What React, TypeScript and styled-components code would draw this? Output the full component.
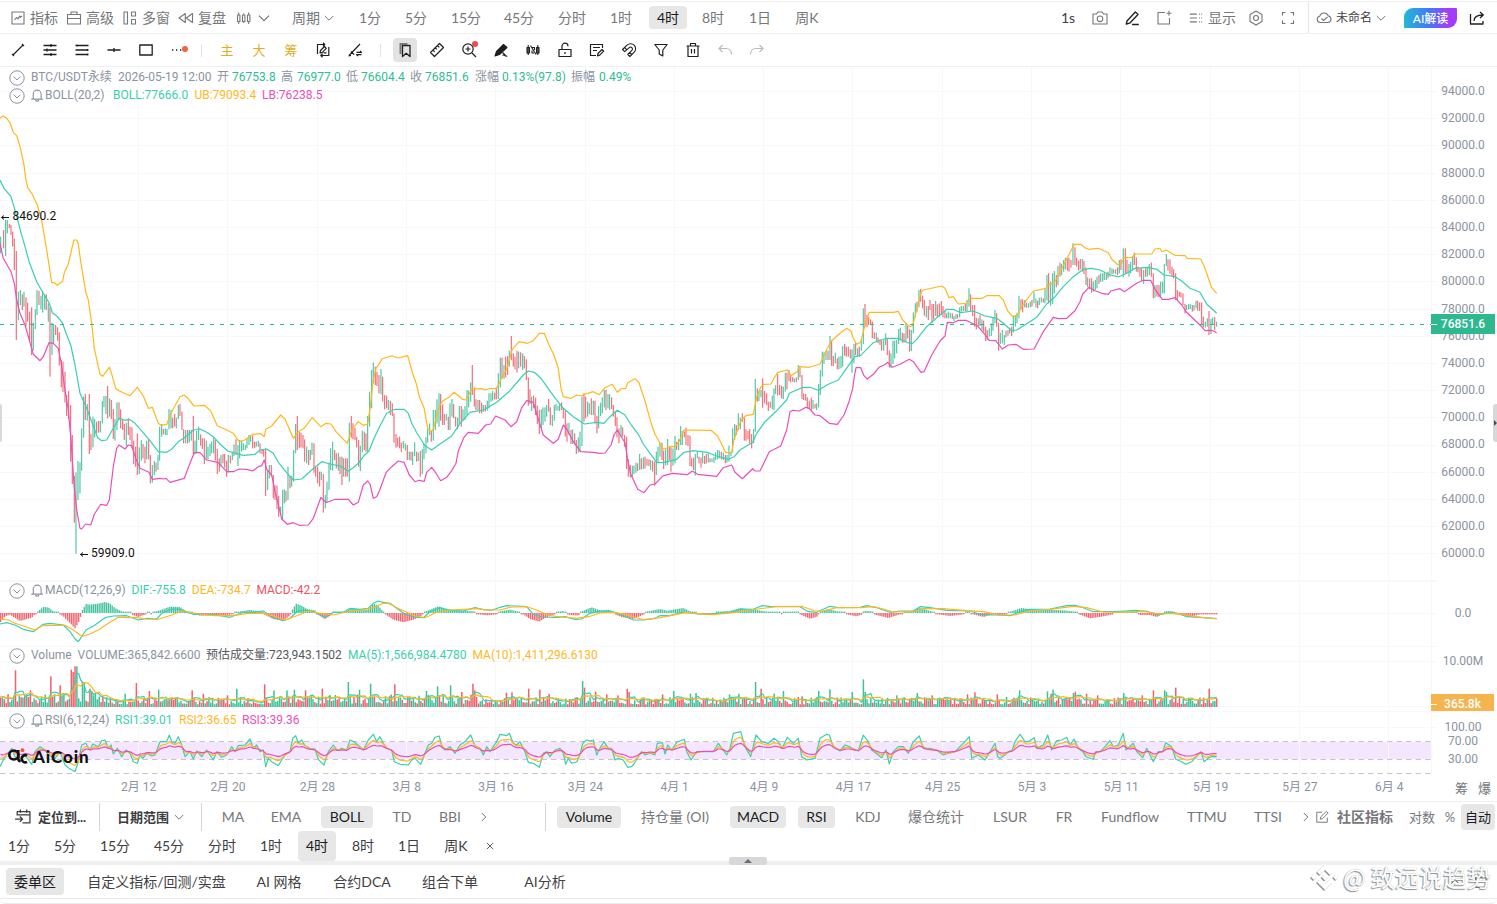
import React from "react";
import styled, { createGlobalStyle, css } from "styled-components";

const GREEN = "#2ebd92";
const RED = "#f0525f";
const TEAL = "#38d0b0";
const AMBER = "#ffb81c";
const PINK = "#e750bb";
const MUTED = "#8b93a1";

const GlobalStyle = createGlobalStyle`
  * { box-sizing: border-box; }
  body { margin: 0; background: #fff; overflow: hidden; }
  svg { display: block; flex: none; }
`;

const uiFont = `Lato, "Noto Sans CJK SC", sans-serif`;
const chartFont = `Roboto, "Noto Sans CJK SC", sans-serif`;

const Screen = styled.div`
  display: flex;
  flex-direction: column;
  width: 1497px;
  height: 904px;
  overflow: hidden;
  position: relative;
  background: #fff;
  font-family: ${uiFont};
  font-size: 14px;
  color: #75777b;
`;

const TopBar = styled.header`
  height: 33px;
  flex: none;
  margin-top: 1px;
  display: flex;
  align-items: center;
  border-top: 1px solid #f0f0f1;
  border-bottom: 1px solid #f0f0f1;
`;

const ToolBar = styled.nav`
  height: 33px;
  flex: none;
  display: flex;
  align-items: center;
  padding-left: 2px;
  border-bottom: 1px solid #f0f0f1;
  color: #1e1f22;
`;

type CellProps = { $w: number; $gap?: number; $active?: boolean; $h?: number; $bold?: boolean; $size?: number; $color?: string };

const Cell = styled.div<CellProps>`
  width: ${(p) => p.$w}px;
  height: ${(p) => p.$h ?? 22}px;
  margin-left: ${(p) => p.$gap ?? 0}px;
  flex: none;
  display: flex;
  align-items: center;
  justify-content: center;
  white-space: nowrap;
  line-height: 20px;
  font-size: ${(p) => p.$size ?? 14}px;
  font-weight: ${(p) => (p.$bold ? 700 : 400)};
  ${(p) => p.$color && css`color: ${p.$color};`}
  ${(p) => p.$active && css`
    background: #e7e7e8;
    border-radius: 4px;
    color: #1b1c1f;
  `}
`;

const Tool = styled.button<{ $active?: boolean; $gold?: boolean; $dim?: boolean }>`
  width: 24px;
  height: 24px;
  margin: 0 4px;
  padding: ${(p) => (p.$gold ? "0 0 2px" : "0")};
  border: 0;
  flex: none;
  position: relative;
  display: flex;
  align-items: center;
  justify-content: center;
  border-radius: 4px;
  font: 13px ${uiFont};
  background: ${(p) => (p.$active ? "#e3e3e4" : "transparent")};
  color: ${(p) => (p.$gold ? "#dfae1f" : p.$dim ? "#b9babd" : "#1e1f22")};
`;

const Dot = styled.i<{ $x: number; $y: number; $c: string }>`
  position: absolute;
  left: ${(p) => p.$x}px;
  top: ${(p) => p.$y}px;
  width: 6px;
  height: 6px;
  border-radius: 50%;
  background: ${(p) => p.$c};
`;

const Rule = styled.i<{ $h: number; $before: number; $after: number; $c?: string }>`
  width: 1px;
  height: ${(p) => p.$h}px;
  margin: 0 ${(p) => p.$after}px 0 ${(p) => p.$before}px;
  flex: none;
  background: ${(p) => p.$c ?? "#e4e4e6"};
`;

const AiBadge = styled.div`
  width: 53px;
  height: 20px;
  margin-left: 18px;
  flex: none;
  border-radius: 9px 1px 9px 1px;
  background: linear-gradient(90deg, #24b8d3 0%, #3f7bfa 45%, #a43bfb 85%);
  color: #fff;
  font-size: 12px;
  line-height: 21px;
  text-align: center;
  font-weight: 500;
`;

const ChartArea = styled.main`
  height: 734px;
  flex: none;
  display: flex;
  flex-direction: column;
  position: relative;
  font-family: ${chartFont};
  font-size: 12px;
  color: ${MUTED};
`;

const Pane = styled.section<{ $h: number }>`
  height: ${(p) => p.$h}px;
  flex: none;
  display: flex;
`;

const Plot = styled.div`
  width: 1431px;
  flex: none;
  position: relative;
  svg { overflow: visible; }
`;

const Axis = styled.div<{ $top: number }>`
  width: 66px;
  padding-top: ${(p) => p.$top}px;
  display: flex;
  flex-direction: column;
  align-items: center;
  position: relative;
`;

const Tick = styled.span<{ $h: number; $gap?: number }>`
  height: ${(p) => p.$h}px;
  line-height: ${(p) => p.$h}px;
  margin-top: ${(p) => p.$gap ?? 0}px;
  padding-right: 2px;
  flex: none;
`;

const Tag = styled.div<{ $top: number; $h: number; $w: number; $bg: string; $drop?: number }>`
  position: absolute;
  left: 0;
  top: ${(p) => p.$top}px;
  width: ${(p) => p.$w}px;
  height: ${(p) => p.$h}px;
  line-height: ${(p) => p.$h + (p.$drop ?? 0)}px;
  background: ${(p) => p.$bg};
  color: #fff;
  font-weight: 500;
  text-align: center;
  &::before {
    content: "";
    position: absolute;
    left: 0;
    top: ${(p) => p.$h / 2 + (p.$drop ?? 0) / 3}px;
    width: 6px;
    height: 1px;
    background: #fff;
  }
`;

const Legends = styled.div<{ $top: number }>`
  position: absolute;
  left: 9px;
  top: ${(p) => p.$top}px;
  display: flex;
  flex-direction: column;
`;

const LegendRow = styled.div`
  height: 18px;
  display: flex;
  align-items: center;
  line-height: 18px;
`;

const Entry = styled.span<{ $w: number; $c?: string }>`
  width: ${(p) => p.$w}px;
  flex: none;
  white-space: nowrap;
  color: ${(p) => p.$c ?? MUTED};
`;

const TimeAxis = styled.div`
  height: 24px;
  flex: none;
  display: flex;
  align-items: center;
  padding: 0 0 5px 94px;
`;

const DateLabel = styled.span`
  width: 89.33px;
  flex: none;
  text-align: center;
  white-space: nowrap;
`;

const Corner = styled.div`
  margin-left: 21px;
  width: 36px;
  flex: none;
  display: flex;
  justify-content: space-between;
  font-size: 13px;
  color: #75777b;
  padding-top: 3px;
`;

const Brand = styled.div`
  position: absolute;
  left: 8px;
  top: 36px;
  display: flex;
  align-items: center;
  gap: 5px;
  color: #111;
  font: 900 17px/19px Lato, sans-serif;
  letter-spacing: 0.9px;
`;

const Indicators = styled.div`
  height: 30px;
  flex: none;
  display: flex;
  align-items: center;
  border-top: 1px solid #f0f0f1;
`;

const Periods = styled.div`
  height: 30px;
  flex: none;
  display: flex;
  align-items: center;
  color: #3c3e42;
`;

const Splitter = styled.div`
  height: 4px;
  flex: none;
  background: #efeff0;
  position: relative;
`;

const Grip = styled.div`
  position: absolute;
  left: 729px;
  top: -4px;
  width: 38px;
  height: 8px;
  border-radius: 2px;
  background: #d8d8da;
  display: flex;
  align-items: center;
  justify-content: center;
`;

const Orders = styled.footer`
  height: 34px;
  flex: none;
  display: flex;
  align-items: center;
  border-bottom: 1px solid #ececed;
  color: #3f4145;
`;

const Under = styled.div`
  height: 5px;
  flex: none;
  border-bottom: 1px solid #ececed;
  border-radius: 0 0 6px 6px;
`;

const SideGrip = styled.div<{ $right?: boolean }>`
  position: absolute;
  ${(p) => (p.$right ? "right: 0; width: 4px; border-radius: 3px 0 0 3px;" : "left: 0; width: 2px; border-radius: 0 2px 2px 0;")}
  top: 404px;
  height: 38px;
  background: #d8d8da;
  display: flex;
  align-items: center;
`;

const Watermark = styled.div`
  position: absolute;
  right: 6px;
  top: 862px;
  height: 30px;
  display: flex;
  align-items: center;
  gap: 3px;
  color: #fff;
  font: 24px/30px "Noto Sans CJK SC", sans-serif;
  white-space: nowrap;
  text-shadow: -1px 1px 1px #8d8d8d, 0 0 1px #a5a5a5;
  svg { filter: drop-shadow(-0.5px 1px 0.6px #8d8d8d); }
`;

/* ---------- chart data ---------- */

type Pt = [number, number];

// Series are stored in sub-pixel thirds, in blocks that share one origin.
const block = (ox: number, oy: number, src: string): Pt[] =>
  src.trim().split(/\s+/).map((s) => {
    const [a, b] = s.split(",").map(Number);
    return [ox + a / 3, oy + b / 3] as Pt;
  });

const upper = [
  ...block(0, 100, `0,55 10,48 20,55 30,68 40,97 50,107 60,140 72,195 77,235 83,263 95,280 112,315 125,362 140,450 155,547 163,548 172,556 188,543 193,518 205,492 217,440 222,420 230,420 235,432 242,485 257,575 265,600 275,670 283,745 300,823 308,829 315,820 328,802 333,815 347,865 358,873 390,887 412,862 430,888 445,925 457,922 475,970 483,976 500,973 515,935 540,890 552,885 562,893 582,918 613,916 632,932 652,977 680,990 700,1000 717,1025 735,1020 758,1003 782,1001 793,1010 797,988 815,978 842,945 855,957 880,1015 895,995 912,985 937,953 962,980 978,970 993,972 1008,995 1042,1030 1055,990 1075,965 1090,976 1103,972 1112,910 1120,840 1128,805`),
  ...block(380, 300, `0,188 5,177 35,167 55,174 83,167 97,217 110,255 118,290 132,323 143,385 152,395 160,388 178,318 188,303 207,292 222,277 233,285 247,298 258,300 275,268 303,266 317,270 327,266 350,265 362,240 380,207 397,148 417,125 442,130 460,122 478,100 493,100 505,130 523,168 535,205 543,265 550,290 573,295 590,285 605,288 613,283 640,275 658,284 675,263 697,253 712,277 722,267 737,265 743,248 765,236 777,248 795,303 812,365 825,403 850,448 870,440 885,440 897,425 912,390 993,391 1013,408 1037,458 1055,457 1062,418`),
  ...block(740, 230, `0,580 7,567 18,557 40,553 50,500 63,470 72,463 93,462 102,445 113,427 142,420 152,437 172,425 178,410 208,412 240,402 250,380 272,335 300,310 320,295 333,303 340,325 350,343 362,337 375,285 388,247 460,247 475,244 487,268 497,280 510,290 517,288 522,272 543,187 550,180 605,168 615,175 627,203 640,200 655,222 678,220 692,205 727,205 740,197 778,197 790,210 803,243 818,260 832,257 845,230 880,183 918,175 923,165 943,158 963,120 1003,43 1022,43 1035,53 1045,58 1075,55 1105,68 1115,87 1133,104 1145,100 1152,83 1175,82 1187,72 1235,72 1245,57 1260,55 1266,65 1278,60 1305,76 1335,77 1342,85 1382,87 1392,107 1415,173 1430,190`),
];

const middle = [
  ...block(0, 100, `0,240 12,265 33,290 42,320 50,350 62,395 75,440 88,487 110,545 130,580 148,610 157,638 170,648 187,668 197,697 212,735 225,795 240,880 260,925 275,965 293,1013 305,1022 320,1020 337,990 358,955 375,961 388,958 405,970 427,995 450,1022 475,1055 500,1057 515,1048 535,1025 560,1008 580,990 600,987 620,997 640,1010 660,1032 683,1053 730,1066 765,1063 780,1050 800,1047 820,1060 835,1087 860,1118 880,1140 905,1137 935,1110 965,1085 990,1092 1020,1098 1045,1113 1060,1103 1075,1090 1092,1067 1107,1053 1120,1020`),
  ...block(380, 300, `0,377 20,340 45,328 73,328 85,340 95,370 110,398 135,437 155,450 180,432 215,408 240,370 270,337 310,330 350,307 390,272 430,225 445,213 463,217 483,235 520,287 550,325 580,350 613,372 650,367 672,370 690,350 712,331 735,345 755,377 775,403 790,432 810,460 830,487 850,488 890,478 912,457 940,452 985,458 1010,468 1045,478 1063,470`),
  ...block(740, 230, `0,660 38,637 50,610 75,575 110,542 140,510 148,490 185,473 210,472 235,481 265,463 295,450 315,422 345,380 362,376 400,338 440,325 475,325 500,337 517,341 530,328 560,290 590,263 620,238 640,238 662,248 700,243 735,258 770,265 790,280 815,302 830,300 850,288 890,262 920,222 945,200 970,170 1000,140 1030,118 1055,115 1080,120 1110,135 1135,140 1155,133 1185,115 1225,112 1250,118 1272,135 1305,140 1325,153 1350,175 1380,187 1400,222 1430,250`),
];

const lower = [
  ...block(0, 100, `0,430 10,475 33,515 43,550 50,600 60,640 75,675 88,720 100,763 120,782 130,770 147,728 160,730 175,745 183,785 195,870 205,930 213,1020 222,1150 230,1230 240,1285 245,1287 257,1272 272,1275 283,1243 302,1213 320,1216 328,1200 340,1100 350,1045 357,1035 375,1047 385,1035 395,1037 407,1075 420,1105 447,1117 457,1138 480,1135 490,1137 498,1135 510,1147 553,1135 570,1090 583,1058 600,1058 620,1080 655,1088 680,1115 700,1115 717,1107 740,1108 758,1113 775,1100 785,1097 793,1080 800,1108 815,1125 825,1175 838,1225 845,1257 862,1273 880,1268 898,1276 925,1275 940,1255 963,1192 978,1208 1005,1198 1045,1198 1060,1215 1075,1207 1090,1155 1103,1143 1110,1152 1120,1195 1130,1190`),
  ...block(380, 300, `0,568 18,518 35,500 55,483 72,487 88,525 105,545 117,541 133,544 140,517 155,502 165,515 182,542 200,532 215,512 228,490 235,453 252,412 265,397 295,400 317,375 332,372 347,348 375,360 393,380 410,365 425,323 440,302 460,307 470,342 490,405 520,430 535,418 550,375 560,387 580,425 602,455 640,457 660,460 675,459 693,435 703,403 712,390 735,428 743,480 752,522 773,568 792,578 810,555 825,552 850,527 878,520 922,524 937,513 953,523 1010,529 1030,503 1055,495 1065,517`),
  ...block(740, 230, `0,740 7,746 38,716 45,723 60,723 88,665 122,648 140,600 150,545 158,541 178,543 197,532 208,535 225,555 240,557 268,580 292,583 312,555 327,515 338,475 343,440 348,413 362,413 372,437 382,447 400,433 417,412 433,405 443,397 457,412 480,403 508,388 520,395 543,427 552,425 575,375 600,333 615,318 622,277 640,278 655,271 678,271 712,287 740,320 748,331 767,332 787,357 805,345 828,343 850,358 882,357 910,305 940,262 955,266 980,265 1005,242 1020,215 1028,192 1047,172 1065,182 1085,190 1105,193 1112,183 1140,176 1153,185 1190,160 1210,151 1232,151 1245,178 1267,208 1285,208 1305,203 1325,225 1340,247 1387,292 1395,302 1415,301 1430,308`),
];

type Bar = { x: number; top: number; bottom: number; up: boolean };

const bars = (ox: number, oy: number, src: string): Bar[] =>
  src.trim().split(/\s*;\s*/).map((s) => {
    const [x, a, b, c] = s.split(" ");
    return { x: ox + +x / 3, top: oy + +a / 3, bottom: oy + +b / 3, up: c === "g" };
  });

const candles: Bar[] = [
  ...bars(0, 100, `2 410 460 g;11 390 445 r;17 360 468 g;22 360 400 g;28 372 385 r;33 375 405 r;38 395 440 r;43 415 510 r;49 453 720 r;55 575 660 g;61 570 615 g;67 583 630 r;72 575 620 g;78 592 680 r;83 608 665 r;89 635 720 r;95 622 765 r;100 668 752 g;106 628 687 g;111 570 645 g;117 573 615 r;123 587 628 g;128 573 638 g;134 583 628 g;139 583 630 r;145 610 665 g;150 622 830 r;156 668 765 g;161 672 730 g;167 675 705 r;173 682 722 r;178 697 797 r;184 780 862 r;189 785 876 r;195 815 908 r;200 885 948 r;206 873 957 r;212 915 1085 r;217 1005 1152 r;223 1128 1268 r;228 1117 1361 g;234 1083 1200 g;240 1087 1180 g;245 985 1112 g;251 890 1013 g;256 882 960 r;262 912 962 g;268 882 1062 r;273 1002 1050 r;279 950 1042 g;284 957 1012 g;290 965 1000 r;296 963 998 r;301 963 997 g;307 903 970 g;312 888 922 g;318 888 942 g;323 858 955 r;329 895 950 g;334 900 957 r;340 927 1017 r;345 957 1022 g;351 907 990 g;357 907 960 r;362 928 985 r;368 957 990 r;373 972 1020 r;379 968 1037 g;385 955 1005 r;390 980 1020 r;396 982 1045 r;401 1022 1092 r;407 1040 1100 r;412 1000 1125 r;418 1042 1122 g;424 1020 1082 g;429 1032 1075 r;435 1040 1090 r;440 1022 1078 g;446 1018 1078 r;451 1065 1150 r;457 1095 1148 g;463 1083 1125 g;468 1088 1115 r;474 1065 1110 g;479 980 1082 g;485 972 1010 g;490 987 1003 r;496 985 1005 g;501 987 1005 g;507 927 988 g;513 930 985 g;518 953 985 r;524 942 980 r;529 953 985 g;535 915 957 g;540 912 948 r;546 935 990 r;551 988 1030 r;557 990 1030 g;563 990 1030 r;568 990 1027 g;574 990 1022 g;580 948 1062 r;585 1022 1063 g;590 993 1060 g;596 980 1020 g;602 1003 1037 r;607 1015 1047 r;613 1015 1092 r;619 1022 1075 g;624 1040 1078 g;630 1032 1068 g;635 1025 1060 g;641 1013 1060 g;646 1020 1082 r;652 1047 1122 r;658 1075 1115 r;663 1065 1100 g;669 1062 1090 r;674 1062 1103 r;680 1082 1130 r;685 1065 1118 g;691 1067 1090 r;697 1055 1080 g;702 1033 1068 g;708 1018 1065 r;714 1035 1098 g;719 1020 1075 g;725 1023 1055 g;730 1030 1050 g;736 1035 1050 g;741 1015 1045 g;747 1005 1035 g;752 1007 1025 g;758 1007 1045 r;764 1025 1045 r;769 1025 1040 g;775 1022 1040 g;780 1030 1060 r;786 1047 1062 r;791 1047 1070 r;797 1045 1188 r;803 1110 1170 g;808 1095 1135 g;814 1095 1130 r;820 1125 1195 r;825 1155 1200 r;831 1157 1227 r;836 1187 1250 r;842 1220 1245 g;848 1170 1260 g;853 1168 1210 g;858 1172 1205 r;864 1100 1200 g;870 1128 1165 r;875 1128 1160 g;881 1050 1145 g;887 972 1060 g;892 948 1050 r;898 995 1045 r;903 998 1042 r;909 1005 1045 r;914 1018 1085 r;920 1040 1090 g;926 1050 1095 r;931 1050 1080 g;936 1028 1065 g;942 1030 1118 r;947 1100 1130 r;953 1100 1150 r;959 1115 1160 r;964 1115 1140 g;970 1122 1238 r;976 1185 1225 g;981 1145 1208 g;987 1088 1170 g;992 1045 1110 g;998 1025 1112 g;1004 1050 1080 r;1009 1060 1105 r;1015 1058 1112 g;1020 1070 1122 r;1026 1070 1155 r;1031 1075 1130 g;1037 1075 1130 r;1042 1075 1130 r;1048 968 1145 g;1054 948 1013 r;1059 970 1018 r;1065 983 1020 r;1070 1010 1042 r;1076 1020 1100 r;1081 1037 1113 g;1087 992 1057 g;1093 995 1050 r;1098 1000 1055 r;1103 948 1055 g;1109 875 980 g;1115 810 925 g;1120 787 850 g;1126 800 855 r;1131 815 858 r;1137 825 880 r`),
  ...bars(380, 300, `3 207 283 g;8 230 305 r;14 285 328 r;20 287 325 r;25 300 330 g;31 303 345 r;37 310 348 r;42 340 428 r;48 402 443 r;53 413 440 r;59 410 445 r;64 428 456 r;70 423 445 g;76 430 452 g;82 435 480 r;88 455 480 g;93 455 482 r;98 455 495 g;104 427 468 g;110 455 485 r;115 458 483 g;121 453 530 r;127 447 522 g;132 432 478 g;138 412 460 g;143 387 428 g;149 370 405 g;154 392 425 r;160 330 422 g;166 330 390 g;171 298 370 g;177 280 380 g;182 282 362 r;188 313 375 r;193 342 375 r;199 342 362 g;205 350 390 r;210 310 390 g;216 297 350 g;221 312 355 r;227 350 380 r;233 353 388 g;238 318 372 g;244 318 380 r;249 328 362 g;255 318 360 g;261 270 345 g;266 272 322 g;272 247 305 g;277 195 285 r;283 262 320 r;288 298 330 r;294 300 332 g;299 300 340 r;305 308 340 r;310 315 335 g;316 315 335 r;322 302 332 g;327 280 325 g;333 280 305 g;338 273 302 g;344 278 298 r;349 262 298 r;355 220 297 g;361 173 262 g;366 173 235 r;372 195 237 g;377 170 232 r;383 168 225 r;388 152 200 g;394 108 180 r;400 160 200 r;405 170 208 r;411 152 218 r;416 155 205 g;422 157 200 r;428 160 210 g;433 168 205 r;439 178 240 r;445 232 317 r;450 268 312 r;455 290 333 g;461 287 325 r;467 293 345 r;472 317 372 r;478 330 402 r;484 328 385 g;489 322 375 g;495 322 365 g;500 315 350 g;506 297 335 r;511 322 375 r;517 345 378 g;523 315 362 g;528 312 332 g;534 318 332 g;539 313 333 g;545 307 330 r;550 325 355 r;556 332 410 r;561 370 425 r;567 368 405 g;573 390 432 r;578 388 432 g;584 400 433 r;589 420 462 r;595 412 458 g;600 395 455 g;606 290 438 g;612 280 365 r;617 290 355 r;623 305 350 g;628 310 342 g;634 295 345 r;640 302 345 g;645 302 370 r;651 348 400 r;656 318 385 g;662 308 348 g;667 292 340 g;673 270 322 g;678 270 330 r;684 282 325 g;689 283 330 g;695 292 327 r;700 315 350 r;706 333 378 r;711 352 412 r;717 385 430 r;723 375 410 g;728 382 410 r;734 405 440 r;740 410 507 r;745 478 530 r;751 495 533 r;757 497 532 g;762 497 522 g;768 488 518 g;773 490 513 r;779 462 510 g;784 475 508 r;790 472 507 g;795 470 505 r;801 477 497 r;807 478 498 r;812 480 510 g;818 482 515 r;824 485 557 r;829 455 525 g;834 440 490 g;840 428 470 g;846 428 480 r;851 452 507 r;857 448 497 g;863 417 495 g;868 440 480 r;873 442 515 r;879 445 497 g;885 408 490 g;890 425 450 r;896 417 450 g;902 378 435 g;907 393 435 g;913 395 412 r;918 383 435 r;924 405 438 r;930 407 498 r;935 475 500 r;941 473 510 r;946 462 527 g;952 455 475 g;957 470 490 r;963 473 503 r;968 458 490 g;974 468 492 r;979 462 490 r;985 460 487 g;990 475 487 r;996 475 487 g;1002 470 488 g;1007 457 480 g;1013 450 478 g;1018 452 475 g;1024 455 478 r;1030 458 480 g;1036 465 490 r;1041 465 488 g;1047 437 485 g;1053 455 468 g;1058 385 457 g;1064 372 420 g;1069 375 405 r;1075 340 390 g`),
  ...bars(740, 230, `1 563 598 g;7 550 575 r;13 562 632 r;18 598 632 r;24 603 628 r;29 597 640 r;35 612 655 r;41 597 640 g;46 447 605 g;52 475 515 r;57 483 513 g;63 480 502 g;68 445 533 r;74 483 520 r;80 490 525 r;85 515 543 r;91 515 533 r;97 497 538 g;102 475 540 g;107 465 492 g;113 432 497 r;119 465 495 r;125 468 505 r;130 470 507 g;136 428 485 g;141 428 478 r;147 420 453 r;152 433 457 r;158 442 455 r;163 445 457 g;169 442 457 r;175 405 450 g;180 412 442 r;186 435 507 r;191 490 510 r;197 492 512 r;202 502 535 r;208 512 537 r;214 503 543 r;219 510 537 g;225 522 535 r;230 520 540 g;236 462 532 g;241 420 495 g;247 365 440 g;252 367 402 g;258 362 390 g;264 362 390 r;270 318 390 g;275 330 408 r;280 378 408 r;286 368 400 g;292 385 418 r;297 380 418 g;303 378 415 g;308 348 410 g;314 342 377 r;319 350 380 r;325 350 380 r;331 358 385 r;336 358 428 g;342 342 400 g;347 340 375 r;353 355 380 g;358 350 380 r;364 330 362 g;370 235 342 g;375 222 290 r;381 255 292 r;386 262 285 r;392 268 285 r;397 275 325 r;403 307 327 r;409 308 335 g;414 322 340 r;420 328 345 r;425 332 362 r;431 330 362 g;437 310 345 g;442 325 375 r;448 362 413 r;453 370 413 g;459 333 402 g;464 332 385 g;470 330 370 g;476 297 342 g;481 293 332 g;487 308 338 r;492 310 338 r;498 278 335 g;503 287 325 r;509 298 365 r;514 300 363 g;520 247 310 g;526 220 262 g;531 215 245 r;537 180 232 g;542 177 215 r;548 197 235 r;553 210 257 r;559 228 262 g;565 228 270 r;570 210 240 r;576 222 278 r;581 222 268 r;587 213 258 g;592 223 260 r;598 220 260 r;604 213 255 r;609 228 262 r;615 243 265 r;620 250 265 g;625 245 265 g;631 248 265 g;637 250 267 r;642 258 273 g;648 252 267 g;653 253 265 r;659 232 262 g;664 228 245 g;670 228 243 g;676 220 243 r;681 210 245 g;687 175 230 g;692 193 243 r;698 225 258 r;704 225 290 r;709 263 298 r;715 265 292 g;720 255 288 r;726 268 300 g;731 272 305 r;737 290 333 r;742 300 330 r;748 295 320 g;754 280 318 g;759 262 302 g;765 240 280 g;770 250 290 r;776 278 362 r;781 308 342 g;787 300 340 g;793 315 345 g;798 302 322 r;804 300 318 g;809 293 310 r;815 290 318 r;820 257 308 g;826 255 290 g;831 248 280 g;837 198 265 g;843 208 238 r;848 208 247 r;854 210 232 g;859 218 233 r;865 220 233 g;871 215 232 g;876 210 230 r;882 185 220 g;888 205 232 g;893 212 235 r;898 203 225 g;904 202 217 g;910 205 218 r;915 178 220 g;921 135 212 g;926 130 220 r;932 155 227 g;938 130 222 g;943 123 190 g;949 135 172 r;954 108 165 g;960 98 140 r;965 102 135 g;971 90 125 g;976 83 118 g;982 85 122 r;987 83 125 r;993 90 113 r;999 40 105 g;1005 52 105 r;1010 83 110 r;1016 92 122 r;1021 87 118 r;1027 87 125 g;1032 92 132 r;1038 112 165 r;1043 142 172 g;1049 145 178 r;1055 145 188 r;1060 155 185 g;1066 150 180 g;1071 140 175 g;1077 135 162 r;1082 130 155 g;1088 130 155 g;1093 128 150 g;1099 130 150 g;1104 125 145 r;1110 112 140 g;1116 115 132 g;1121 118 130 r;1127 118 132 g;1133 112 135 r;1138 90 130 g;1143 88 120 r;1150 55 142 g;1156 55 132 r;1161 90 130 r;1167 102 140 g;1172 95 130 g;1178 80 122 g;1183 68 105 r;1189 82 125 r;1194 110 127 r;1200 115 140 r;1205 115 152 r;1211 120 162 g;1217 115 140 r;1222 112 140 g;1228 102 135 g;1234 98 140 r;1240 130 205 r;1245 165 203 g;1251 165 200 r;1257 165 202 r;1262 155 200 g;1268 155 190 g;1273 102 190 g;1279 72 108 g;1284 88 122 r;1290 88 132 r;1296 110 140 r;1301 118 145 r;1307 130 210 r;1312 180 210 r;1318 185 200 r;1323 187 203 r;1329 190 225 r;1335 222 250 r;1340 225 240 g;1346 222 238 g;1351 223 237 g;1357 225 245 r;1362 225 242 g;1368 212 235 g;1373 212 242 r;1379 217 243 r;1385 217 285 r;1390 260 292 r;1396 275 293 g;1402 265 290 g;1407 243 315 r;1413 267 312 g;1418 262 285 g;1424 262 300 r;1430 275 290 g`),
];

const dif = [
  ...block(0, 575, `0,147 20,143 45,150 70,163 100,170 130,148 150,145 190,150 210,170 225,192 235,200 245,185 258,165 285,150 315,128 340,123 380,122 415,135 440,130 470,132 485,115 515,103 540,102 555,110 580,118 640,118 690,127 730,112 760,112 790,108 820,128 850,137 870,130 890,110 915,105 945,112 975,128 1000,112 1030,112 1050,100 1080,103 1105,100 1120,85 1135,78 1150,82 1170,85 1190,100 1215,118 1245,127 1270,128 1290,110 1320,98 1345,106 1390,108 1425,98 1450,104 1475,106`),
  ...block(500, 575, `0,97 20,92 50,93 80,95 100,118 125,126 170,127 195,125 225,133 245,132 270,115 300,108 330,108 370,122 400,135 430,135 465,130 480,122 510,122 545,112 580,115 620,118 690,112 725,102 760,103 785,92 810,94 900,95 925,110 950,112 965,105 990,94 1015,98 1080,97 1100,92 1130,98 1170,112 1200,108 1240,108 1260,95 1290,98 1340,106 1410,108 1440,118 1480,120`),
  ...block(1000, 575, `0,120 30,122 60,110 90,103 150,102 200,92 225,91 250,98 280,110 340,110 375,108 405,106 440,109 475,120 500,114 530,114 560,125 600,127 650,131`),
];

const dea = [
  ...block(0, 575, `0,132 25,135 45,145 70,153 105,165 125,153 145,151 195,151 220,165 245,184 270,177 295,165 325,145 355,127 410,128 440,132 475,133 515,120 545,108 600,117 645,122 700,122 745,115 790,115 820,122 855,135 890,122 925,108 960,115 1000,120 1050,108 1080,106 1120,98 1150,85 1165,85 1200,103 1245,123 1275,128 1310,112 1350,105 1430,101 1460,105`),
  ...block(500, 575, `0,105 35,96 80,95 110,105 150,122 190,126 230,130 270,124 300,114 345,112 390,122 430,134 480,128 560,112 580,115 640,119 700,113 750,105 830,95 905,94 945,108 970,108 1010,98 1085,98 1120,95 1150,102 1180,111 1240,110 1270,101 1330,101 1400,107 1450,110`),
  ...block(1000, 575, `0,120 45,120 90,108 150,103 220,94 260,98 310,111 360,112 430,109 480,117 530,115 580,124 620,129 650,131`),
];

const histogram = [
  ...block(0, 0, `0,-30 15,-10 30,-5 60,-24 95,-14 107,-2 112,4 130,18 145,17 160,5 172,3 178,-3 190,-10 210,-30 225,-46 240,-20 245,5 258,27 270,25 295,28 315,33 330,28 345,15 365,5 392,3 396,-5 415,-12 440,-3 445,4 455,-5 462,4 480,8 510,19 540,18 560,5 575,3 585,-4 600,-8 650,-8 690,-5 715,4 750,9 785,4 792,-4 820,-18 850,-22 870,-8 876,8 888,28 905,22 920,12 945,8 952,-4 975,-18 995,-5 1000,4 1035,4 1055,15 1075,10 1090,8 1105,10 1120,28 1135,22 1150,3 1158,-5 1180,-20 1210,-28 1240,-20 1265,-8 1275,4 1290,10 1315,20 1335,14 1365,8 1420,5 1435,-4 1460,-7 1490,-4`),
  ...block(500, 0, `0,5 30,10 55,4 70,-4 90,-18 118,-26 135,-15 160,-5 170,3 190,6 205,-5 235,-8 245,5 275,17 300,8 325,10 340,3 347,-5 365,-12 400,-18 430,-5 440,4 480,12 500,7 550,15 570,5 585,4 600,-4 640,-4 650,4 690,6 720,15 745,10 770,9 800,4 835,4 845,-4 855,4 895,4 902,-5 930,-17 950,-12 960,4 985,12 1010,5 1035,4 1040,-4 1070,-10 1087,-4 1092,6 1115,5 1125,-5 1165,-15 1200,-4 1225,4 1240,8 1260,16 1290,6 1315,-4 1350,-9 1385,-5 1400,4 1420,-4 1450,-12 1480,-4`),
  ...block(1000, 0, `0,-8 20,-4 30,4 65,15 100,10 130,10 190,8 225,4 240,-5 270,-16 310,-10 340,-4 345,4 390,5 410,4 420,-6 450,-6 470,-12 487,-4 495,5 515,6 530,-4 570,-12 600,-4 650,-4`),
];

const rsi1 = [
  ...block(0, 575, `0,575 10,555 20,540 35,520 45,545 60,560 75,540 95,568 105,530 120,515 135,525 145,540 165,550 180,530 195,570 205,578 225,590 235,560 245,510 257,505 270,525 278,507 295,515 305,497 315,495 325,520 333,510 340,537 352,520 365,545 378,525 390,535 400,560 412,565 420,540 428,550 440,535 455,543 465,540 480,500 500,500 508,480 515,500 525,505 535,485 545,510 555,545 570,530 580,552 590,528 605,545 620,525 640,555 650,530 665,547 680,540 695,515 705,530 715,512 735,510 750,492 760,520 770,510 780,530 790,525 797,575 805,550 815,560 835,572 845,555 855,540 870,530 878,490 887,482 895,505 905,495 915,512 930,520 945,522 955,553 972,570 985,530 1000,510 1012,527 1025,520 1040,525 1050,495 1062,500 1080,515 1090,525 1105,495 1120,478 1130,500 1140,485 1150,505 1160,520 1175,525 1183,560 1200,568 1225,570 1235,555 1245,550 1262,568 1275,535 1285,510 1295,505 1305,487 1318,483 1325,515 1335,525 1350,515 1365,535 1380,510 1395,500 1412,480 1425,512 1440,520 1450,540 1460,515 1470,530 1480,515 1490,500`),
  ...block(500, 575, `0,478 20,482 28,475 40,505 50,510 60,500 75,530 85,562 100,565 118,577 130,535 140,530 150,545 165,525 180,520 190,535 197,568 205,550 215,565 230,560 240,540 248,505 260,495 270,498 280,495 290,540 300,520 312,500 325,520 335,520 345,555 355,550 370,555 383,577 395,575 405,562 415,545 425,530 435,540 450,535 465,540 472,505 487,503 495,537 503,510 515,525 530,502 553,493 560,530 573,555 580,545 590,530 605,530 640,530 655,505 680,540 690,520 700,475 722,470 735,515 752,545 768,480 785,500 805,505 822,490 835,500 847,520 862,487 880,505 895,490 905,545 920,555 945,550 960,490 980,478 988,480 1000,515 1020,528 1035,510 1050,515 1065,525 1075,528 1090,480 1105,500 1115,525 1145,548 1158,525 1168,567 1180,530 1195,515 1210,515 1225,535 1240,500 1258,483 1270,520 1290,520 1310,525 1330,540 1345,535 1365,530 1380,515 1395,500 1408,485 1415,550 1435,540 1455,555 1470,530 1485,505 1493,545`),
  ...block(1000, 575, `0,550 15,540 25,530 37,525 45,500 60,478 75,500 85,500 103,488 110,520 130,510 143,480 155,525 170,497 185,495 200,487 210,510 222,492 235,520 248,530 258,545 280,553 287,530 300,530 315,515 330,497 340,515 355,510 370,475 378,525 400,505 410,530 428,548 440,520 460,560 475,530 488,530 497,503 515,515 527,553 545,560 557,568 575,560 590,545 603,530 612,560 625,550 633,545 650,545`),
];

const volumeSpikes = `16 110 r;31 50 r;50 92 r;60.5 65 r;70.5 112 r;72.4 105 r;74.3 122 r;76.2 122 g;82 75 g;84 75 g;89 55 r;126 40 g;137 72 r;150 48 r;159 52 g;193 50 r;204 40 r;227 35 r;237 55 g;265 68 r;273 50 g;287 50 g;295 52 g;306 50 r;323 55 r;349 75 g;360 52 g;370 70 g;394 68 r;427 48 g;438 62 g;450 65 g;461 45 r;472 70 r;474 50 r;506 43 r;511 44 r;528 55 r;539 52 r;550 40 r;582 78 g;584 58 r;595 46 r;606 38 r;617 35 r;627 55 r;629 45 r;662 38 r;673 48 g;690 40 g;696 42 g;729 38 g;739 40 g;755 75 g;762 55 r;774 40 g;784 48 g;802 32 r;818 48 g;829 53 g;852 45 g;863 83 g;865 45 g;897 35 g;918 42 g;932 35 r;967 38 r;974 44 r;997 38 r;1007 30 g;1019 50 g;1047 47 g;1051 40 r;1053 52 g;1073 42 g;1075 46 r;1086 40 r;1097 35 r;1123 42 g;1142 35 r;1153 50 r;1164 50 g;1166 45 g;1176 58 r;1203 28 r;1209 55 r`
  .split(";")
  .map((s) => s.split(" "));

const STEP = 89.25 / 48;
const slots = Array.from({ length: 655 }, (_, i) => 0.6 + i * STEP);

const sample = (pts: Pt[], x: number) => {
  let i = 1;
  while (i < pts.length - 1 && pts[i][0] < x) i++;
  const [a, b] = [pts[i - 1], pts[i]];
  const t = Math.max(0, Math.min(1, (x - a[0]) / (b[0] - a[0] || 1)));
  return a[1] + (b[1] - a[1]) * t;
};

const hash = (i: number) => {
  const v = Math.sin(i * 127.1 + 11.7) * 43758.5453;
  return v - Math.floor(v);
};

const volumes = slots.map((x, i) => {
  const busy = x < 60 ? 1.3 : x < 105 ? 1.6 : x > 265 && x < 480 ? 1.25 : 1;
  return { x, h: (8 + 22 * hash(i) ** 1.3) * busy / 3, up: hash(i + 900) > 0.47 };
});
volumeSpikes.forEach(([x, h, c]) => {
  const i = Math.min(volumes.length - 1, Math.round((+x - 0.6) / STEP));
  volumes[i] = { x: volumes[i].x, h: +h / 3, up: c === "g" };
});

const volumeAverage = (n: number): Pt[] =>
  volumes.map((v, i) => {
    const part = volumes.slice(Math.max(0, i - n + 1), i + 1);
    return [v.x, 706 - part.reduce((s, p) => s + p.h, 0) / part.length];
  });

const damp = (pts: Pt[], k: number, ease: number): Pt[] => {
  let prev = 752;
  return slots.map((x) => {
    const target = 751 + (sample(pts, x) - 751) * k;
    prev += (target - prev) * ease;
    return [x, prev] as Pt;
  });
};

const toPath = (pts: Pt[]) => "M" + pts.map(([x, y]) => `${x.toFixed(1)} ${y.toFixed(1)}`).join("L");

const Line = ({ pts, color }: { pts: Pt[]; color: string }) => (
  <path d={toPath(pts)} fill="none" stroke={color} strokeWidth={1.2} strokeLinejoin="round" />
);

const gridX = [138, 227, 317, 406, 495, 585, 674, 763, 852, 942, 1031, 1120, 1210, 1299, 1388, 1431];

const Grid = ({ top, height, rows }: { top: number; height: number; rows: number[] }) => (
  <g fill="#f8f8f9">
    {gridX.map((x) => <rect key={x} x={x} y={top} width={1} height={height} />)}
    {rows.map((y) => <rect key={y} x={0} y={Math.round(y)} width={1437} height={1} />)}
  </g>
);

const prices = Array.from({ length: 18 }, (_, i) => 94000 - i * 2000);
const dates = ["2月 12", "2月 20", "2月 28", "3月 8", "3月 16", "3月 24", "4月 1", "4月 9", "4月 17", "4月 25", "5月 3", "5月 11", "5月 19", "5月 27", "6月 4"];

/* ---------- icons ---------- */

type IconProps = { d: string; s?: number; sw?: number; children?: React.ReactNode };
const Icon = ({ d, s = 16, sw = 1.1, children }: IconProps) => (
  <svg width={s} height={s} viewBox="0 0 16 16" fill="none" stroke="currentColor" strokeWidth={sw} strokeLinejoin="round">
    <path d={d} />
    {children}
  </svg>
);

const ChevronDown = ({ w = 10 }: { w?: number }) => (
  <svg width={w} height={w} viewBox="0 0 10 10" fill="none" stroke="currentColor" strokeWidth={1}>
    <path d="M.8 3l4.2 4.2L9.2 3" />
  </svg>
);
const ChevronRight = () => (
  <svg width="8" height="10" viewBox="0 0 8 10" fill="none" stroke="currentColor" strokeWidth={1}>
    <path d="M1.8 1l4 4-4 4" />
  </svg>
);

const Toggle = styled.span`
  width: 16px;
  height: 16px;
  margin: 2px 6px 0 0;
  flex: none;
  color: ${MUTED};
`;
const Bell = styled.span`
  width: 14px;
  height: 15px;
  flex: none;
  color: ${MUTED};
`;

const LegendToggle = () => (
  <Toggle>
    <Icon d="M4.6 6.6L8 10l3.4-3.4" sw={1}><circle cx="8" cy="8" r="7.2" /></Icon>
  </Toggle>
);
const LegendBell = () => (
  <Bell>
    <Icon s={15} sw={1.2} d="M.3 11.800h12.400M2.400 11.600V6.500a4.200 4.200 0 018.400 0v5.100M4.800 12.800c.5 1.700 3.100 1.700 3.600 0" />
  </Bell>
);

const icons = {
  chart: "M2 2h12v12H2zM4.5 10l2-2.5L8 9l1.6-3 .8 1.4 1.6-1.6",
  case: "M1.5 4.5h13v9.500h-13zM5 4.5V2h6v2.5M1.5 8.5h13",
  windows: "M2 2h3.500v12H2zM9.5 2H13.500v4H9.500zM9.5 9.500H13.500V14H9.500z",
  rewind: "M7.300 3.500L1 8l6.300 4.500zM14.500 3.500L8.200 8l6.300 4.500z",
  candles: "M1.500 5h2.400v6.500H1.500zM6.500 5h2.400v6.500H6.500zM11.500 5h2.400v6.500H11.500zM2.700 2.500V5m0 6.500V14M7.700 3.500V5m0 6.500V13M12.700 2.500V5m0 6.500V14",
  camera: "M1 4h3.600l1.200-2h4.400l1.200 2H15v10H1z",
  pen: "M3 11l8.300-9 2.700 2.500L5.700 13.200 2.300 14zM8 14.500h6.800",
  newTab: "M9 2.500H2v11.500h11.500V8M13 .8v5M10.500 3.300h5",
  list: "M1 3.500h8M1 8h8M1 12.500h8M11.500 3.500h1M11.500 8h1M11.500 12.500h1M14 3.500h1M14 8h1M14 12.500h1",
  hex: "M8 1l6 3.500v7L8 15l-6-3.500v-7z",
  full: "M2.500 5.500V2.500h3M10.500 2.500h3v3M13.500 10.500v3h-3M5.500 13.500h-3v-3",
  cloud: "M4 12.500a3.200 3.200 0 01-.3-6.300A4.600 4.600 0 0112.400 6a3.300 3.300 0 01-.4 6.500zM5.500 8.500l2 2 4-3.500",
  share: "M1.500 4v10H14v-3M5 11c0-4 3-6 9-6M11 2l3.300 3-3.300 3",
  trend: "M3 13L13 3M2 12l2 2M12 2l2 2",
  lines: "M1.500 3.500h13M1.500 8h13M1.500 12.500h13M9 2v3M5 6.500v3M9 11v3",
  lines2: "M1.500 3.500h13M1.500 8h13M1.500 12.500h13M3 2.500v2M13.500 7v2M13.500 11.500v2",
  hline: "M1.500 8h13M8 6v4",
  rect: "M1.800 3h12.400v10H1.800z",
  edit: "M2.500 12V2.500H9.500M8 .8l1.800 1.700L8 4.200M13.800 5v8.500H6M7.600 15.200l-1.800-1.700 1.800-1.700M5 10.800l.5-2.300 4-4 1.800 1.800-4 4zM8.500 10.800h3",
  brush: "M2 13.500L13 2M4 9.500l3.200 3.200M1.500 14l2.500-.5M9.500 10.300h5l-1.500-1.500M14.500 12.700h-5l1.500 1.500",
  mark: "M5.500 3.500H13v11L9.200 11.300 5.500 14.500z",
  ruler: "M1.500 10.500l9-9 4 4-9 9zM4 8l1.800 1.800M6.300 5.800l1.500 1.500M8.500 3.500l1.800 1.800",
  zoom: "M11 11l4 4M4.500 7h5M7 4.500v5",
  marker: "M9.500 13.500c1.500-2 2.500 1.500 4.800.5M9.500 10.500l3 3",
  kline: "M2 5.500h2.500v5.500H2zM11.500 5.500H14v5.500h-2.500zM3.200 3v10M12.800 3v10M5.500 3.500l5.500 9M7 8.500v2.500h2M7 5.500h2.500V8",
  lock: "M2 7.500h12v7H2zM5 7.500V4.200a3 3 0 016 0M8 10v2",
  note: "M13.500 6V2.500h-12v11H7M4 5.500h7M4 8.500h4M8.500 13.800l.5-2.300 4-4 1.700 1.700-4 4z",
  magnet: "M1.500 7.500L6 3.200a5 5 0 017.200 7L8.800 14.500 6.700 12.400l4.200-4.100a1.900 1.900 0 00-2.700-2.700L3.800 9.700zM3.600 5.500l2.200 2.300M8.700 10.400l2.200 2.200",
  filter: "M1.800 2.500h12.400L9.800 8v6l-3.600-2V8z",
  trash: "M1.500 4h13M3 4v10.500h10V4M5.500 4V1.500h5V4M6.500 7v4.500M9.500 7v4.500",
  undo: "M5.500 3L2 6.500 5.500 10M2.300 6.500H9c4 0 5.500 3 5.500 6",
  redo: "M10.500 3L14 6.500 10.500 10M13.700 6.500H7c-4 0-5.500 3-5.500 6",
  locate: "M3 7V3.500h12V14H8M3 6.500h12M6 1.500v3M12 1.500v3M1 10.500h7M5.500 8l2.500 2.500L5.500 13",
  compose: "M8 2.500H2V14h12V8.500M6 10.500l.6-2.600L13 1.500l2 2-6.500 6.500z",
  close: "M3 3l10 10M13 3L3 13",
};

/* ---------- sections ---------- */

const Top = () => (
  <TopBar>
    <Cell $w={16} $gap={10}><Icon d={icons.chart} /></Cell>
    <Cell $w={28} $gap={4}>指标</Cell>
    <Cell $w={16} $gap={8}><Icon d={icons.case} /></Cell>
    <Cell $w={28} $gap={4}>高级</Cell>
    <Cell $w={16} $gap={8}><Icon d={icons.windows} /></Cell>
    <Cell $w={28} $gap={4}>多窗</Cell>
    <Cell $w={16} $gap={8}><Icon d={icons.rewind} /></Cell>
    <Cell $w={28} $gap={4}>复盘</Cell>
    <Cell $w={16} $gap={10}><Icon d={icons.candles} sw={1.1} /></Cell>
    <Cell $w={12} $gap={6}><ChevronDown w={12} /></Cell>
    <Cell $w={28} $gap={22}>周期</Cell>
    <Cell $w={10} $gap={4}><ChevronDown /></Cell>
    <Cell $w={22} $gap={25}>1分</Cell>
    <Cell $w={22} $gap={24}>5分</Cell>
    <Cell $w={30} $gap={24}>15分</Cell>
    <Cell $w={30} $gap={23}>45分</Cell>
    <Cell $w={28} $gap={24}>分时</Cell>
    <Cell $w={22} $gap={24}>1时</Cell>
    <Cell $w={38} $gap={17} $h={23} $active>4时</Cell>
    <Cell $w={22} $gap={15}>8时</Cell>
    <Cell $w={22} $gap={25}>1日</Cell>
    <Cell $w={24} $gap={24}>周K</Cell>
    <Cell $w={16} $gap={241} $color="#3f4145">1s</Cell>
    <Cell $w={16} $gap={16}><Icon d={icons.camera}><circle cx="8" cy="8.800" r="2.800" /></Icon></Cell>
    <Cell $w={16} $gap={16} $color="#1e1f22"><Icon d={icons.pen} sw={1.3} /></Cell>
    <Cell $w={16} $gap={16}><Icon d={icons.newTab} /></Cell>
    <Cell $w={14} $gap={17}><Icon d={icons.list} s={14} sw={1.3} /></Cell>
    <Cell $w={28} $gap={5}>显示</Cell>
    <Cell $w={16} $gap={12}><Icon d={icons.hex}><circle cx="8" cy="8" r="2.500" /></Icon></Cell>
    <Cell $w={16} $gap={16}><Icon d={icons.full} sw={1.2} /></Cell>
    <Rule $h={31} $before={12} $after={8} />
    <Cell $w={14} $size={12}><Icon d={icons.cloud} s={16} /></Cell>
    <Cell $w={36} $gap={5} $size={12} $color="#3f4145">未命名</Cell>
    <Cell $w={10} $gap={4}><ChevronDown /></Cell>
    <AiBadge>AI解读</AiBadge>
    <Cell $w={16} $gap={12} $color="#1e1f22"><Icon d={icons.share} sw={1.3} /></Cell>
  </TopBar>
);

const Tools = () => (
  <ToolBar>
    <Tool><Icon d={icons.trend} sw={1.2} /></Tool>
    <Tool><Icon d={icons.lines} sw={1.3} /></Tool>
    <Tool><Icon d={icons.lines2} sw={1.3} /></Tool>
    <Tool><Icon d={icons.hline} sw={1.3} /></Tool>
    <Tool><Icon d={icons.rect} sw={1.3} /></Tool>
    <Tool>
      <Icon d="M2 8h1.300M6 8h1.300M10 8h1.300" sw={1.3} />
      <Dot $x={16} $y={8} $c="#f2643d" />
    </Tool>
    <Rule $h={13} $before={7} $after={9} />
    <Tool $gold>主</Tool>
    <Tool $gold>大</Tool>
    <Tool $gold>筹</Tool>
    <Tool><Icon d={icons.edit} sw={1.2} /></Tool>
    <Tool><Icon d={icons.brush} sw={1.2} /></Tool>
    <Rule $h={13} $before={9} $after={8} />
    <Tool $active>
      <Icon d={icons.mark} sw={1.3}><path d="M2.500 2h8M3.500 2v10" strokeWidth={2} stroke="#77787b" /></Icon>
    </Tool>
    <Tool><Icon d={icons.ruler} sw={1.2} /></Tool>
    <Tool>
      <Icon d={icons.zoom} sw={1.2}><circle cx="7" cy="7" r="5.200" /></Icon>
      <Dot $x={15} $y={3} $c="#f4474d" />
    </Tool>
    <Tool>
      <Icon d={icons.marker}><path d="M2 14l1.500-4.500L10.500 2.500l3.500 3-7.500 7z" fill="currentColor" /></Icon>
    </Tool>
    <Tool><Icon d={icons.kline} sw={1.1} /></Tool>
    <Tool><Icon d={icons.lock} sw={1.2} /></Tool>
    <Tool><Icon d={icons.note} sw={1.2} /></Tool>
    <Tool><Icon d={icons.magnet} sw={1.1} /></Tool>
    <Tool><Icon d={icons.filter} sw={1.2} /></Tool>
    <Tool><Icon d={icons.trash} sw={1.2} /></Tool>
    <Tool $dim><Icon d={icons.undo} sw={1.1} /></Tool>
    <Tool $dim><Icon d={icons.redo} sw={1.1} /></Tool>
  </ToolBar>
);

const PricePane = () => (
  <Pane $h={513}>
    <Plot>
      <svg width={1437} height={513} viewBox="0 67 1437 513">
        <Grid top={67} height={513} rows={prices.map((_, i) => 90.9 + i * 27.2)} />
        {candles.map((c, i) => (
          <rect key={i} x={c.x - 0.6} y={c.top} width={1.15} height={c.bottom - c.top} fill={c.up ? GREEN : RED} opacity={0.85} />
        ))}
        <Line pts={upper} color={AMBER} />
        <Line pts={middle} color={TEAL} />
        <Line pts={lower} color={PINK} />
        <path d="M0 324.500H1431" stroke="#2db88f" strokeDasharray="4 6" />
        <g fontFamily="Roboto" fontSize={12} fill="#111">
          <text x={12.500} y={220}>84690.2</text>
          <text x={91} y={557}>59909.0</text>
        </g>
        <path d="M9 217.500H1.500M4 215.500l-2.500 2 2.500 2M88 554.500h-7.500M83 552.500l-2.500 2 2.500 2" fill="none" stroke="#111" />
      </svg>
      <Legends $top={1}>
        <LegendRow>
          <LegendToggle />
          <Entry $w={87}>BTC/USDT永续</Entry>
          <Entry $w={99}>2026-05-19 12:00</Entry>
          <Entry $w={15}>开</Entry><Entry $w={49} $c={GREEN}>76753.8</Entry>
          <Entry $w={16}>高</Entry><Entry $w={49} $c={GREEN}>76977.0</Entry>
          <Entry $w={15}>低</Entry><Entry $w={49} $c={GREEN}>76604.4</Entry>
          <Entry $w={15}>收</Entry><Entry $w={50} $c={GREEN}>76851.6</Entry>
          <Entry $w={27}>涨幅</Entry><Entry $w={69} $c={GREEN}>0.13%(97.8)</Entry>
          <Entry $w={28}>振幅</Entry><Entry $w={40} $c={GREEN}>0.49%</Entry>
        </LegendRow>
        <LegendRow>
          <LegendToggle /><LegendBell />
          <Entry $w={68}>BOLL(20,2)</Entry>
          <Entry $w={81.4} $c={TEAL}>BOLL:77666.0</Entry>
          <Entry $w={67.600} $c={AMBER}>UB:79093.4</Entry>
          <Entry $w={70} $c={PINK}>LB:76238.5</Entry>
        </LegendRow>
      </Legends>
    </Plot>
    <Axis $top={11}>
      {prices.map((p) => <Tick key={p} $h={27.2}>{p}.0</Tick>)}
      <Tag $top={247} $h={20} $w={64} $bg="#2db88f">76851.6</Tag>
    </Axis>
  </Pane>
);

const MacdPane = () => (
  <Pane $h={66}>
    <Plot>
      <svg width={1437} height={66} viewBox="0 580 1437 66">
        <Grid top={580} height={66} rows={[580, 581, 613]} />
        {slots.map((x, i) => {
          const v = sample(histogram, x);
          const h = Math.max(1.4, Math.abs(v));
          return <rect key={i} x={x - 0.65} y={v > 0 ? 613 - h : 613} width={1.35} height={h} fill={v > 0 ? GREEN : RED} opacity={0.9} />;
        })}
        <Line pts={dif} color={TEAL} />
        <Line pts={dea} color={AMBER} />
      </svg>
      <Legends $top={1}>
        <LegendRow>
          <LegendToggle /><LegendBell />
          <Entry $w={86.600}>MACD(12,26,9)</Entry>
          <Entry $w={60.200} $c={TEAL}>DIF:-755.8</Entry>
          <Entry $w={64.700} $c={AMBER}>DEA:-734.7</Entry>
          <Entry $w={70} $c={RED}>MACD:-42.2</Entry>
        </LegendRow>
      </Legends>
    </Plot>
    <Axis $top={26}><Tick $h={14}>0.0</Tick></Axis>
  </Pane>
);

const VolumePane = () => (
  <Pane $h={65}>
    <Plot>
      <svg width={1437} height={65} viewBox="0 646 1437 65">
        <Grid top={646} height={65} rows={[646, 661, 706]} />
        {volumes.map((v, i) => (
          <rect key={i} x={v.x - 0.7} y={707 - v.h} width={1.5} height={v.h} fill={v.up ? GREEN : RED} opacity={0.92} />
        ))}
        <Line pts={volumeAverage(5)} color={TEAL} />
        <Line pts={volumeAverage(10)} color={AMBER} />
      </svg>
      <Legends $top={0}>
        <LegendRow>
          <LegendToggle />
          <Entry $w={46.600}>Volume</Entry>
          <Entry $w={128.400}>VOLUME:365,842.6600</Entry>
          <Entry $w={142} $c="#55585e">预估成交量:723,943.1502</Entry>
          <Entry $w={124.500} $c={TEAL}>MA(5):1,566,984.4780</Entry>
          <Entry $w={130} $c={AMBER}>MA(10):1,411,296.6130</Entry>
        </LegendRow>
      </Legends>
    </Plot>
    <Axis $top={8}>
      <Tick $h={14}>10.00M</Tick>
      <Tag $top={48} $h={17} $w={63} $bg="#f6b44f" $drop={3}>365.8k</Tag>
    </Axis>
  </Pane>
);

const RsiPane = () => (
  <Pane $h={65}>
    <Plot>
      <svg width={1437} height={65} viewBox="0 711 1437 65">
        <rect x={0} y={742} width={1431} height={17} fill="#f4e6fd" />
        <Grid top={711} height={65} rows={[711, 727]} />
        <path d="M0 741.500H1431M0 759.500H1431M0 773.500H1431" stroke="#c6c6c9" strokeDasharray="5.500 4" />
        <Line pts={rsi1} color={TEAL} />
        <Line pts={damp(rsi1, 0.72, 0.6)} color={AMBER} />
        <Line pts={damp(rsi1, 0.42, 0.45)} color={PINK} />
      </svg>
      <Legends $top={0}>
        <LegendRow>
          <LegendToggle /><LegendBell />
          <Entry $w={70}>RSI(6,12,24)</Entry>
          <Entry $w={64} $c={TEAL}>RSI1:39.01</Entry>
          <Entry $w={63} $c={AMBER}>RSI2:36.65</Entry>
          <Entry $w={63} $c={PINK}>RSI3:39.36</Entry>
        </LegendRow>
      </Legends>
      <Brand>
        <svg width={20} height={18} viewBox="0 0 20 18" fill="none" stroke="#111" strokeWidth={2.600}>
          <circle cx="5.800" cy="7" r="4.500" />
          <path d="M10.300 2v8.500c0 2 .8 2.800 2.200 2.800M19 7.600a3.600 3.600 0 100 6.300" />
          <circle cx="14.500" cy="2.200" r="1.900" fill="#f0553a" stroke="none" />
        </svg>
        AiCoin
      </Brand>
    </Plot>
    <Axis $top={9}>
      <Tick $h={14}>100.00</Tick>
      <Tick $h={14}>70.00</Tick>
      <Tick $h={14} $gap={4}>30.00</Tick>
    </Axis>
  </Pane>
);

const Bottom = () => (
  <>
    <Indicators>
      <Cell $w={18} $gap={13} $color="#3c3e42"><Icon d={icons.locate} s={17} sw={1.2} /></Cell>
      <Cell $w={48} $gap={7} $size={13} $bold $color="#3c3e42">定位到...</Cell>
      <Rule $h={28} $before={13} $after={17} $c="#d5d5d8" />
      <Cell $w={52} $size={13} $bold $color="#3c3e42">日期范围</Cell>
      <Cell $w={10} $gap={5}><ChevronDown /></Cell>
      <Rule $h={28} $before={17} $after={20} $c="#d5d5d8" />
      <Cell $w={22}>MA</Cell>
      <Cell $w={30} $gap={27}>EMA</Cell>
      <Cell $w={52} $gap={20} $active>BOLL</Cell>
      <Cell $w={18} $gap={20}>TD</Cell>
      <Cell $w={22} $gap={28}>BBI</Cell>
      <Cell $w={8} $gap={19}><ChevronRight /></Cell>
      <Rule $h={28} $before={57} $after={11} $c="#d5d5d8" />
      <Cell $w={64} $active>Volume</Cell>
      <Cell $w={70} $gap={19}>持仓量 (OI)</Cell>
      <Cell $w={56} $gap={20} $active>MACD</Cell>
      <Cell $w={37} $gap={12} $active>RSI</Cell>
      <Cell $w={26} $gap={20}>KDJ</Cell>
      <Cell $w={56} $gap={27}>爆仓统计</Cell>
      <Cell $w={36} $gap={28}>LSUR</Cell>
      <Cell $w={18} $gap={27}>FR</Cell>
      <Cell $w={60} $gap={27}>Fundflow</Cell>
      <Cell $w={40} $gap={27}>TTMU</Cell>
      <Cell $w={30} $gap={26}>TTSI</Cell>
      <Cell $w={8} $gap={19}><ChevronRight /></Cell>
      <Cell $w={14} $gap={5}><Icon d={icons.compose} s={14} /></Cell>
      <Cell $w={56} $gap={8} $bold>社区指标</Cell>
      <Cell $w={26} $gap={16} $size={13}>对数</Cell>
      <Cell $w={12} $gap={9} $size={13}>%</Cell>
      <Cell $w={34} $gap={5} $h={26} $size={13} $active>自动</Cell>
    </Indicators>
    <Periods>
      <Cell $w={22} $gap={8}>1分</Cell>
      <Cell $w={22} $gap={24}>5分</Cell>
      <Cell $w={30} $gap={24}>15分</Cell>
      <Cell $w={30} $gap={24}>45分</Cell>
      <Cell $w={28} $gap={24}>分时</Cell>
      <Cell $w={22} $gap={24}>1时</Cell>
      <Cell $w={38} $gap={16} $h={30} $active>4时</Cell>
      <Cell $w={22} $gap={16}>8时</Cell>
      <Cell $w={22} $gap={24}>1日</Cell>
      <Cell $w={24} $gap={24}>周K</Cell>
      <Cell $w={10} $gap={17}><Icon d={icons.close} s={10} sw={1.3} /></Cell>
    </Periods>
    <Splitter>
      <Grip>
        <svg width={8} height={4} viewBox="0 0 8 4"><path d="M0 4l4-4 4 4z" fill="#6c6d70" /></svg>
      </Grip>
    </Splitter>
    <Orders>
      <Cell $w={58} $gap={6} $h={27} $active>委单区</Cell>
      <Cell $w={137} $gap={24}>自定义指标/回测/实盘</Cell>
      <Cell $w={46} $gap={31}>AI 网格</Cell>
      <Cell $w={56} $gap={32}>合约DCA</Cell>
      <Cell $w={56} $gap={32}>组合下单</Cell>
      <Cell $w={42} $gap={46}>AI分析</Cell>
      <Cell $w={12} $gap={883}><Icon d="M2 11l6-6 6 6" s={12} sw={1.3} /></Cell>
      <Cell $w={14} $gap={13}><Icon d="M2 3h12v11H2z" s={14} sw={1.3} /></Cell>
    </Orders>
    <Under />
  </>
);

export default function App() {
  return (
    <Screen>
      <GlobalStyle />
      <Top />
      <Tools />
      <ChartArea>
        <PricePane />
        <MacdPane />
        <VolumePane />
        <RsiPane />
        <TimeAxis>
          {dates.map((d) => <DateLabel key={d}>{d}</DateLabel>)}
          <Corner><span>筹</span><span>爆</span></Corner>
        </TimeAxis>
      </ChartArea>
      <Bottom />
      <SideGrip />
      <SideGrip $right>
        <svg width={4} height={8} viewBox="0 0 4 8"><path d="M1 1l3 3-3 3z" fill="#4a4b4e" /></svg>
      </SideGrip>
      <Watermark>
        <svg width={30} height={30} viewBox="0 0 30 30" fill="#fff">
          <path d="M15 2l8 8-3 3-5-5-5 5-3-3zM15 28l-8-8 3-3 5 5 5-5 3 3zM4 12l3 3-3 3-3-3zM26 12l3 3-3 3-3-3zM15 11.500l3.500 3.500-3.500 3.500-3.500-3.500z" />
        </svg>
        <span>@ 致远说趋势</span>
      </Watermark>
    </Screen>
  );
}
